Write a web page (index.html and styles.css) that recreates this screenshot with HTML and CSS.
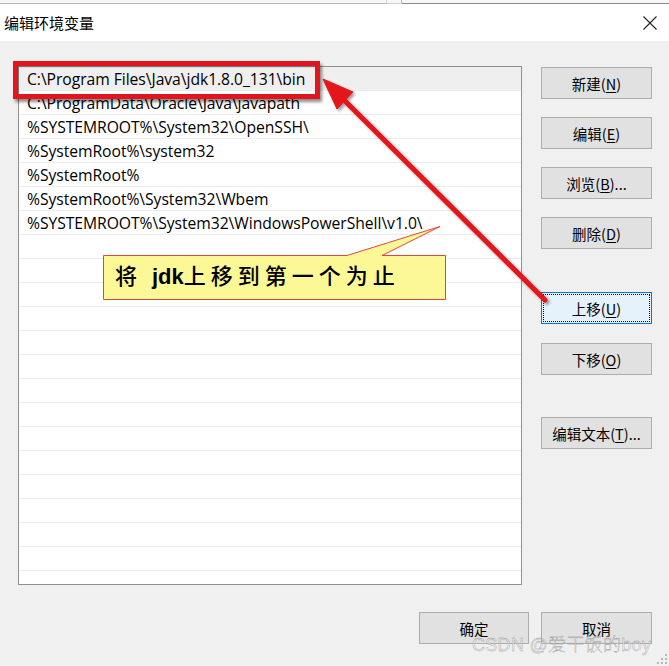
FILE: index.html
```html
<!DOCTYPE html>
<html lang="zh-CN">
<head>
<meta charset="utf-8">
<title>编辑环境变量</title>
<link rel="stylesheet" href="styles.css">
</head>
<body>
<div class="top">
  <span class="seg seg-a"></span><span class="seg seg-b"></span><span class="seg seg-c"></span>
</div>
<header class="titlebar">
  <span class="title">编辑环境变量</span>
  <svg class="close" width="14" height="14" viewBox="0 0 14 14"><path d="M0.5 0.5 L13.5 13.5 M13.5 0.5 L0.5 13.5" stroke="#222" stroke-width="1.1" fill="none"/></svg>
</header>
<main class="dialog">
  <div class="content">
    <div class="list">
      <div class="row sel">C:\Program Files\Java\jdk1.8.0_131\bin</div>
      <div class="row">C:\ProgramData\Oracle\Java\javapath</div>
      <div class="row">%SYSTEMROOT%\System32\OpenSSH\</div>
      <div class="row">%SystemRoot%\system32</div>
      <div class="row">%SystemRoot%</div>
      <div class="row">%SystemRoot%\System32\Wbem</div>
      <div class="row">%SYSTEMROOT%\System32\WindowsPowerShell\v1.0\</div>
      <div class="row"></div><div class="row"></div><div class="row"></div>
      <div class="row"></div><div class="row"></div><div class="row"></div>
      <div class="row"></div><div class="row"></div><div class="row"></div>
      <div class="row"></div><div class="row"></div><div class="row"></div>
      <div class="row"></div><div class="row"></div>
    </div>
    <div class="btns">
      <button class="btn">新建(<u>N</u>)</button>
      <button class="btn">编辑(<u>E</u>)</button>
      <button class="btn">浏览(<u>B</u>)...</button>
      <button class="btn">删除(<u>D</u>)</button>
      <button class="btn focus gap-a"><span class="focus-ring">上移(<u>U</u>)</span></button>
      <button class="btn gap-b">下移(<u>O</u>)</button>
      <button class="btn gap-c">编辑文本(<u>T</u>)...</button>
    </div>
  </div>
  <div class="footer">
    <button class="btn">确定</button>
    <button class="btn">取消</button>
  </div>
</main>

<div class="redbox"></div>
<svg class="arrow" width="669" height="666" viewBox="0 0 669 666">
  <defs>
    <filter id="sh" x="-10%" y="-10%" width="130%" height="130%">
      <feDropShadow dx="2" dy="2" stdDeviation="1.5" flood-color="#000" flood-opacity="0.4"/>
    </filter>
  </defs>
  <g filter="url(#sh)" fill="#e3141b" stroke="#e3141b">
    <line x1="342" y1="98" x2="545" y2="300" stroke-width="5" stroke-linecap="round"/>
    <polygon points="323,79 353,92 337,109" stroke-width="1" stroke-linejoin="round"/>
  </g>
</svg>
<div class="callout">
  <svg class="callout-bg" width="344" height="74" viewBox="0 0 344 74">
    <path d="M0.5 29.5 H244 L337 0.5 L279 29.5 H342.5 V73.5 H0.5 Z" fill="#fdf896" stroke="#e2453c" stroke-width="1"/>
  </svg>
  <span class="callout-text">将 <b>jdk</b>上移到第一个为止</span>
</div>
<div class="watermark">CSDN @爱干饭的boy</div>
<svg class="grip" width="12" height="12" viewBox="0 0 12 12">
  <g fill="#b8b8b8">
    <rect x="9" y="1" width="2" height="2"/>
    <rect x="5" y="5" width="2" height="2"/><rect x="9" y="5" width="2" height="2"/>
    <rect x="1" y="9" width="2" height="2"/><rect x="5" y="9" width="2" height="2"/><rect x="9" y="9" width="2" height="2"/>
  </g>
</svg>
</body>
</html>
```
FILE: styles.css
```css
* { box-sizing: border-box; }
html, body { margin: 0; padding: 0; }
body {
  width: 669px;
  height: 666px;
  overflow: hidden;
  position: relative;
  background: #f0f0f0;
  font-family: "Noto Sans CJK SC", sans-serif;
  color: #000;
}
.top {
  height: 4px;
  display: flex;
  background: #f7f7f7;
}
.seg { height: 4px; border-bottom: 1px solid #b5b5b5; }
.seg-a { width: 387px; border-right: 1px solid #d8d8d8; }
.seg-b { width: 15px; border-right: 1px solid #bdbdbd; border-bottom-color: #d0d0d0; }
.seg-c { flex: 1; border-bottom-color: #8c8c8c; }
.titlebar {
  height: 37px;
  background: #fff;
  display: flex;
  align-items: center;
  justify-content: space-between;
  padding: 0 12px 0 4px;
}
.title { font-size: 15px; line-height: 20px; margin-top: 1px; }
.close { display: block; margin-top: 1px; }
.dialog { padding-top: 25px; }
.content { display: flex; align-items: flex-start; padding-left: 18px; }
.list {
  width: 504px;
  height: 519px;
  background: #fff;
  border: 1px solid #8f8f8f;
  overflow: hidden;
}
.row {
  height: 24px;
  line-height: 21px;
  padding-top: 2px;
  border-bottom: 1px solid #ececec;
  margin-left: 1px;
  padding-left: 7px;
  font-family: "Open Sans", "Noto Sans CJK SC", sans-serif;
  font-size: 15.7px;
  letter-spacing: -0.05px;
  white-space: nowrap;
}
.row.sel { background: #efefef; }
.btns {
  margin-left: 19px;
  width: 111px;
  display: flex;
  flex-direction: column;
  gap: 18px;
  padding-top: 1px;
}
.btn {
  height: 32px;
  width: 111px;
  background: #e1e1e1;
  border: 1px solid #adadad;
  font-family: "Noto Sans CJK SC", sans-serif;
  font-size: 14.5px;
  color: #000;
  padding: 0;
  margin: 0;
  display: flex;
  align-items: center;
  justify-content: center;
}
.btn u { text-decoration: underline; text-underline-offset: 2px; }
.gap-a { margin-top: 25px; }
.gap-b { margin-top: 1px; }
.gap-c { margin-top: 24px; }
.btn.focus {
  background: #e5f1fb;
  border-color: #0078d7;
  padding: 1px;
}
.focus-ring {
  flex: 1;
  align-self: stretch;
  display: flex;
  align-items: center;
  justify-content: center;
  border: 1px dotted #000;
}
.footer {
  display: flex;
  justify-content: flex-end;
  gap: 12px;
  padding-right: 17px;
  margin-top: 27px;
}
.footer .btn { width: 110px; }
.footer .btn + .btn { width: 111px; }

.redbox {
  position: absolute;
  left: 13px;
  top: 61px;
  width: 307px;
  height: 38px;
  border: 5px solid #e3141b;
  box-shadow: 2px 3px 3px rgba(0,0,0,0.45), inset 1px 1px 2px rgba(0,0,0,0.25);
}
.arrow {
  position: absolute;
  left: 0;
  top: 0;
  pointer-events: none;
}
.callout {
  position: absolute;
  left: 103px;
  top: 226px;
  width: 344px;
  height: 74px;
}
.callout-bg { position: absolute; left: 0; top: 0; }
.callout-text {
  position: relative;
  display: block;
  padding: 33px 0 0 12px;
  font-size: 22px;
  line-height: 30px;
  letter-spacing: 5px;
  font-family: "Noto Sans CJK SC", sans-serif;
  font-weight: 500;
  white-space: nowrap;
}
.callout-text b {
  font-family: "Liberation Sans", sans-serif;
  font-weight: bold;
  letter-spacing: 0;
}
.watermark {
  position: absolute;
  left: 472px;
  top: 634px;
  font-family: "Liberation Sans", "Noto Sans CJK SC", sans-serif;
  font-size: 18px;
  font-weight: 300;
  line-height: 22px;
  letter-spacing: 0.3px;
  color: rgba(235,235,235,0.5);
  -webkit-text-stroke: 0.3px #8c8c8c;
  white-space: nowrap;
}
.grip {
  position: absolute;
  right: 1px;
  bottom: 1px;
}
```
